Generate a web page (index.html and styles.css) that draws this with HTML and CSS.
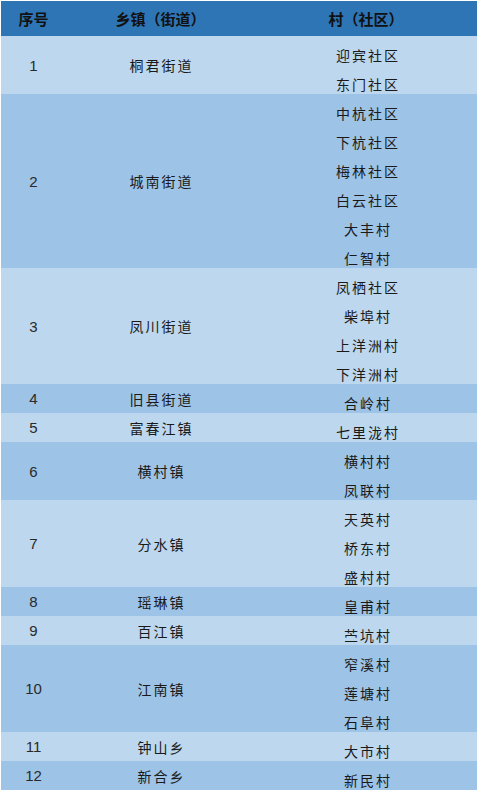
FILE: index.html
```html
<!DOCTYPE html>
<html lang="zh">
<head>
<meta charset="utf-8">
<link rel="stylesheet" href="styles.css">
</head>
<body>
<table class="tbl">
  <colgroup>
    <col class="c1"><col class="c2"><col class="c3">
  </colgroup>
  <thead>
    <tr class="head"><th>序号</th><th>乡镇（街道）</th><th>村（社区）</th></tr>
  </thead>
  <tbody>
    <tr class="light"><td class="num">1</td><td class="town">桐君街道</td><td class="vil"><div>迎宾社区</div><div>东门社区</div></td></tr>
    <tr class="dark"><td class="num">2</td><td class="town">城南街道</td><td class="vil"><div>中杭社区</div><div>下杭社区</div><div>梅林社区</div><div>白云社区</div><div>大丰村</div><div>仁智村</div></td></tr>
    <tr class="light"><td class="num">3</td><td class="town">凤川街道</td><td class="vil"><div>凤栖社区</div><div>柴埠村</div><div>上洋洲村</div><div>下洋洲村</div></td></tr>
    <tr class="dark"><td class="num">4</td><td class="town">旧县街道</td><td class="vil"><div>合岭村</div></td></tr>
    <tr class="light"><td class="num">5</td><td class="town">富春江镇</td><td class="vil"><div>七里泷村</div></td></tr>
    <tr class="dark"><td class="num">6</td><td class="town">横村镇</td><td class="vil"><div>横村村</div><div>凤联村</div></td></tr>
    <tr class="light"><td class="num">7</td><td class="town">分水镇</td><td class="vil"><div>天英村</div><div>桥东村</div><div>盛村村</div></td></tr>
    <tr class="dark"><td class="num">8</td><td class="town">瑶琳镇</td><td class="vil"><div>皇甫村</div></td></tr>
    <tr class="light"><td class="num">9</td><td class="town">百江镇</td><td class="vil"><div>苎坑村</div></td></tr>
    <tr class="dark"><td class="num">10</td><td class="town">江南镇</td><td class="vil"><div>窄溪村</div><div>莲塘村</div><div>石阜村</div></td></tr>
    <tr class="light"><td class="num">11</td><td class="town">钟山乡</td><td class="vil"><div>大市村</div></td></tr>
    <tr class="dark"><td class="num">12</td><td class="town">新合乡</td><td class="vil"><div>新民村</div></td></tr>
  </tbody>
</table>
</body>
</html>
```
FILE: styles.css
```css
html, body {
  margin: 0;
  padding: 0;
  background: #ffffff;
}
body {
  padding: 1px 0 0 1px;
}
.tbl {
  border-collapse: collapse;
  border-spacing: 0;
  table-layout: fixed;
  width: 476px;
  font-family: "Noto Sans CJK SC", "Liberation Sans", sans-serif;
  color: #1a1a1a;
}
.c1 { width: 65px; }
.c2 { width: 189px; }
.c3 { width: 222px; }
.tbl th, .tbl td {
  padding: 0;
  text-align: center;
  vertical-align: middle;
}
.head {
  background: #2e75b6;
  height: 35px;
}
.head th {
  font-size: 15px;
  font-weight: bold;
  line-height: 35px;
  color: #111111;
}
.light { background: #bdd7ee; }
.dark { background: #9dc3e6; }
.num {
  font-family: "Liberation Sans", "Noto Sans", sans-serif;
  font-size: 15px;
  color: #2a2a2a;
  padding-right: 1px;
}
.town {
  font-size: 14px;
  letter-spacing: 2px;
  text-indent: 2px;
}
.vil {
  font-size: 14px;
  letter-spacing: 2px;
  text-indent: 4px;
}
.vil div {
  height: 29px;
  box-sizing: border-box;
  padding-top: 10px;
  line-height: 19px;
  overflow: visible;
  white-space: nowrap;
}
```
